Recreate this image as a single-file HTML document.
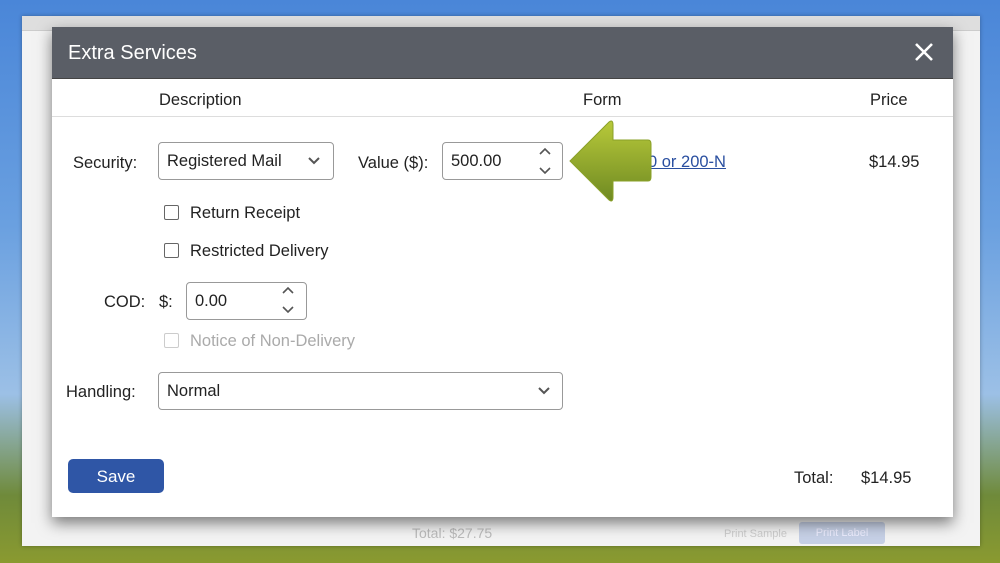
<!DOCTYPE html><html><head><style>
body{margin:0;width:1000px;height:563px;overflow:hidden;position:relative;font-family:"Liberation Sans",sans-serif;background:linear-gradient(#4a86d8 0%,#6aa0e0 40%,#9cc0e6 70%,#6f8a3a 88%,#8a9a30 100%)}
.win{position:absolute;left:22px;top:16px;width:958px;height:530px;background:#f3f3f3;box-shadow:0 0 4px rgba(0,0,0,.3)}
.bar{height:14px;background:#dedede;border-bottom:1px solid #ccc}
.modal{position:absolute;left:52px;top:27px;width:901px;height:490px;background:#fff;box-shadow:0 6px 14px rgba(0,0,0,.5)}
.hd{height:51px;background:#5a5e66;color:#fff;font-size:20px;line-height:52px;padding-left:16px;border-bottom:1px solid #444}
.t{position:absolute;font-size:16.5px;color:#222}
.box{position:absolute;border:1px solid #999;border-radius:4px;background:#fff;font-size:16.5px;color:#222;box-sizing:border-box;padding-left:8px;line-height:37px}
.cb{position:absolute;width:13px;height:13px;border:1px solid #666;border-radius:2px}
</style></head><body>
<div class="win"><div class="bar"></div></div>
<div class="t" style="left:412px;top:525px;color:#bbb;font-size:14px">Total: $27.75</div>
<div class="t" style="left:724px;top:528px;color:#ccc;font-size:11px">Print Sample</div>
<div style="position:absolute;left:799px;top:522px;width:86px;height:22px;background:#c6d0e6;border-radius:3px;color:#eef;font-size:11px;text-align:center;line-height:22px">Print Label</div>
<div class="modal">
<div class="hd">Extra Services</div>
<svg style="position:absolute;left:862px;top:15px" width="20" height="20"><path d="M2 2L18 18M18 2L2 18" stroke="#fff" stroke-width="2.6"/></svg>
<div style="position:absolute;left:0;right:0;top:89px;border-top:1px solid #ddd"></div>
</div>
<div class="t" style="left:159px;top:91px">Description</div>
<div class="t" style="left:583px;top:91px">Form</div>
<div class="t" style="left:870px;top:91px">Price</div>
<div class="t" style="left:73px;top:154px">Security:</div>
<div class="box" style="left:158px;top:142px;width:176px;height:38px">Registered Mail</div>
<svg style="position:absolute;left:307px;top:156px" width="14" height="10"><path d="M2 2l5 5 5-5" stroke="#555" stroke-width="2" fill="none"/></svg>
<div class="t" style="left:358px;top:154px">Value ($):</div>
<div class="box" style="left:442px;top:142px;width:121px;height:38px">500.00</div>
<svg style="position:absolute;left:538px;top:146px" width="14" height="32"><path d="M2 8l5-5 5 5M2 22l5 5 5-5" stroke="#555" stroke-width="1.6" fill="none"/></svg>
<div class="t" style="left:648px;top:153px;color:#2a4fa0;text-decoration:underline">0 or 200-N</div>
<div class="t" style="left:869px;top:153px">$14.95</div>
<svg style="position:absolute;left:565px;top:117px" width="90" height="90"><defs><linearGradient id="g" x1="0" y1="0" x2="0" y2="1"><stop offset="0" stop-color="#b8c93a"/><stop offset="1" stop-color="#6f8a22"/></linearGradient></defs><path d="M5 44L44 5Q48 2 48 8V23H83Q86 23 86 27V60Q86 64 83 64H48V80Q48 86 44 83Z" fill="url(#g)" stroke="#8aa028"/></svg>
<div class="cb" style="left:164px;top:205px"></div><div class="t" style="left:190px;top:204px">Return Receipt</div>
<div class="cb" style="left:164px;top:243px"></div><div class="t" style="left:190px;top:242px">Restricted Delivery</div>
<div class="t" style="left:104px;top:293px">COD:</div><div class="t" style="left:159px;top:293px">$:</div>
<div class="box" style="left:186px;top:282px;width:121px;height:38px">0.00</div>
<svg style="position:absolute;left:281px;top:285px" width="14" height="32"><path d="M2 8l5-5 5 5M2 22l5 5 5-5" stroke="#555" stroke-width="1.6" fill="none"/></svg>
<div class="cb" style="left:164px;top:333px;border-color:#ccc"></div><div class="t" style="left:190px;top:332px;color:#aaa">Notice of Non-Delivery</div>
<div class="t" style="left:66px;top:383px">Handling:</div>
<div class="box" style="left:158px;top:372px;width:405px;height:38px">Normal</div>
<svg style="position:absolute;left:537px;top:386px" width="14" height="10"><path d="M2 2l5 5 5-5" stroke="#555" stroke-width="2" fill="none"/></svg>
<div style="position:absolute;left:68px;top:459px;width:96px;height:34px;background:#2f56a6;border-radius:5px;color:#fff;font-size:17px;text-align:center;line-height:36px">Save</div>
<div class="t" style="left:794px;top:469px">Total:</div>
<div class="t" style="left:861px;top:469px">$14.95</div>
</body></html>
